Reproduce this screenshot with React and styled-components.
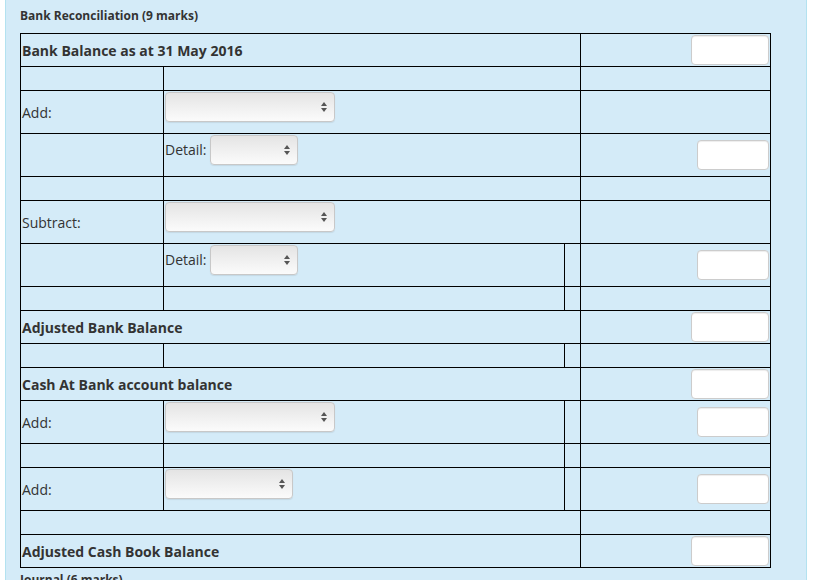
import styled, { createGlobalStyle } from 'styled-components';

const GlobalStyle = createGlobalStyle`
  html, body {
    margin: 0;
    padding: 0;
    background: #ffffff;
  }
  body {
    font-family: "Open Sans", "DejaVu Sans", sans-serif;
    color: #333333;
  }
`;

const Panel = styled.div`
  margin-left: 5px;
  width: 802px;
  box-sizing: border-box;
  min-height: 600px;
  background: #d4ebf8;
  border-left: 1px solid #b3e2f0;
  border-right: 1px solid #b3e2f0;
  padding: 7px 14px 0;
`;

const SectionTitle = styled.h4`
  margin: 0 0 8px;
  font-size: 12px;
  line-height: 18px;
  font-weight: 700;
  color: #333333;
`;

const NextTitle = styled(SectionTitle)`
  margin-top: 3px;
`;

const Table = styled.table`
  border-collapse: collapse;
  table-layout: fixed;
  width: 751px;
  font-size: 14px;
  line-height: 20px;
`;

const Row = styled.tr`
  height: ${(p) => p.$h}px;
`;

const Cell = styled.td`
  border: 1px solid #000000;
  padding: 1px;
  vertical-align: middle;
  text-align: ${(p) => (p.$right ? 'right' : 'left')};
  white-space: nowrap;
`;

const LabelCell = styled(Cell)`
  padding: 2px 1px 0;
  font-weight: ${(p) => (p.$bold ? 700 : 400)};
`;

const Amount = styled.input`
  box-sizing: border-box;
  width: ${(p) => (p.$wide ? 78 : 72)}px;
  height: 30px;
  margin: 0;
  padding: 4px 6px;
  border: 1px solid #cccccc;
  border-radius: 4px;
  background: #ffffff;
  box-shadow: inset 0 1px 1px rgba(0, 0, 0, 0.075);
  font: inherit;
  vertical-align: middle;
`;

const SelectWrap = styled.span`
  position: relative;
  display: inline-block;
  vertical-align: middle;
  margin-bottom: ${(p) => (p.$detail ? 0 : 10)}px;
  margin-left: ${(p) => (p.$detail ? 3 : 0)}px;

  &::before,
  &::after {
    content: '';
    position: absolute;
    right: 8px;
    width: 0;
    height: 0;
    border-left: 3px solid transparent;
    border-right: 3px solid transparent;
    pointer-events: none;
  }
  &::before {
    top: 10px;
    border-bottom: 4px solid #555555;
  }
  &::after {
    top: 16px;
    border-top: 4px solid #555555;
  }
`;

const Select = styled.select`
  appearance: none;
  -webkit-appearance: none;
  box-sizing: border-box;
  display: block;
  width: ${(p) => p.$w}px;
  height: 30px;
  margin: 0;
  border: 1px solid #c8c8c8;
  border-radius: 4px;
  background: linear-gradient(#e4e4e4, #fbfbfb);
  box-shadow: 0 1px 1px rgba(0, 0, 0, 0.08);
  font: inherit;
`;

const DetailLine = styled.div`
  display: flex;
  align-items: baseline;
  margin-bottom: 10px;
`;

const Dropdown = ({ width, detail }) => (
  <SelectWrap $detail={detail}>
    <Select $w={width}>
      <option value=""></option>
    </Select>
  </SelectWrap>
);

const Detail = () => (
  <DetailLine>
    Detail:
    <Dropdown width={88} detail />
  </DetailLine>
);

const Spacer = ({ split, full }) => (
  <Row $h={24}>
    {full ? (
      <Cell colSpan={3} />
    ) : (
      <>
        <Cell />
        {split ? (
          <>
            <Cell />
            <Cell />
          </>
        ) : (
          <Cell colSpan={2} />
        )}
      </>
    )}
    <Cell />
  </Row>
);

const TotalRow = ({ label }) => (
  <Row $h={33}>
    <LabelCell colSpan={3} $bold>{label}</LabelCell>
    <Cell $right>
      <Amount $wide />
    </Cell>
  </Row>
);

const App = () => (
  <>
    <GlobalStyle />
    <Panel>
      <SectionTitle>Bank Reconciliation (9 marks)</SectionTitle>
      <Table>
        <colgroup>
          <col style={{ width: 143 }} />
          <col style={{ width: 401 }} />
          <col style={{ width: 16 }} />
          <col style={{ width: 190 }} />
        </colgroup>
        <tbody>
          <TotalRow label="Bank Balance as at 31 May 2016" />
          <Spacer />
          <Row $h={43}>
            <LabelCell>Add:</LabelCell>
            <Cell colSpan={2}><Dropdown width={170} /></Cell>
            <Cell />
          </Row>
          <Row $h={43}>
            <Cell />
            <Cell colSpan={2}><Detail /></Cell>
            <Cell $right><Amount /></Cell>
          </Row>
          <Spacer />
          <Row $h={43}>
            <LabelCell>Subtract:</LabelCell>
            <Cell colSpan={2}><Dropdown width={170} /></Cell>
            <Cell />
          </Row>
          <Row $h={43}>
            <Cell />
            <Cell><Detail /></Cell>
            <Cell />
            <Cell $right><Amount /></Cell>
          </Row>
          <Spacer split />
          <TotalRow label="Adjusted Bank Balance" />
          <Spacer split />
          <TotalRow label="Cash At Bank account balance" />
          <Row $h={43}>
            <LabelCell>Add:</LabelCell>
            <Cell><Dropdown width={170} /></Cell>
            <Cell />
            <Cell $right><Amount /></Cell>
          </Row>
          <Spacer split />
          <Row $h={43}>
            <LabelCell>Add:</LabelCell>
            <Cell><Dropdown width={128} /></Cell>
            <Cell />
            <Cell $right><Amount /></Cell>
          </Row>
          <Spacer full />
          <TotalRow label="Adjusted Cash Book Balance" />
        </tbody>
      </Table>
      <NextTitle>Journal (6 marks)</NextTitle>
    </Panel>
  </>
);

export default App;
